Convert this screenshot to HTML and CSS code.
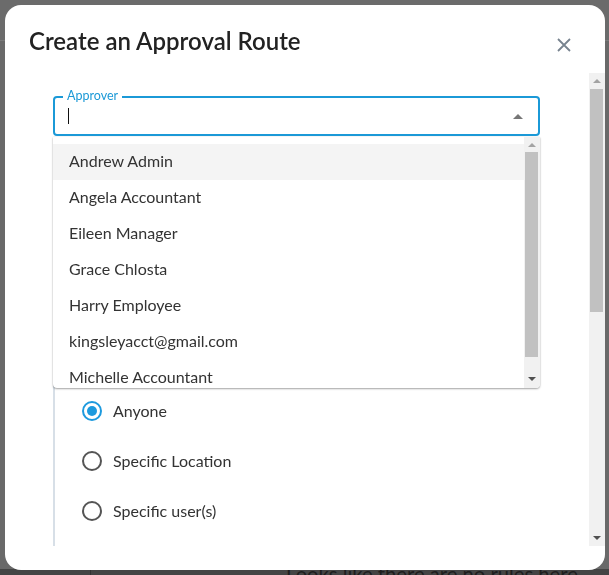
FILE: index.html
```html
<!DOCTYPE html>
<html lang="en">
<head>
<meta charset="utf-8">
<title>Create an Approval Route</title>
<link rel="stylesheet" href="styles.css">
</head>
<body>
<div class="page">
  <div class="page-top"></div>
  <div class="page-main"></div>
  <div class="page-foot">
    <div class="foot-side"></div>
    <div class="foot-main"><p class="empty">Looks like there are no rules here</p></div>
  </div>
</div>

<div class="modal">
  <header class="modal-head">
    <h2 class="modal-title">Create an Approval Route</h2>
    <button class="close" aria-label="Close">
      <svg width="24" height="24" viewBox="0 0 24 24"><path d="M6 6L18 18M18 6L6 18" stroke="#77838f" stroke-width="1.8" fill="none"/></svg>
    </button>
  </header>
  <div class="modal-body">
    <div class="modal-scroll">
      <div class="field">
        <span class="field-label">Approver</span>
        <span class="caret"></span>
        <span class="arrow-up"></span>
        <div class="listbox">
          <ul class="opts">
            <li class="opt active">Andrew Admin</li>
            <li class="opt">Angela Accountant</li>
            <li class="opt">Eileen Manager</li>
            <li class="opt">Grace Chlosta</li>
            <li class="opt">Harry Employee</li>
            <li class="opt">kingsleyacct@gmail.com</li>
            <li class="opt">Michelle Accountant</li>
          </ul>
          <div class="lscroll">
            <div class="sb-btn sb-btn-l"><span class="tri-up light"></span></div>
            <div class="lthumb"></div>
            <div class="sb-fill"></div>
            <div class="sb-btn sb-btn-l"><span class="tri-down"></span></div>
          </div>
        </div>
      </div>
      <div class="options">
        <label class="radio-row"><span class="radio checked"></span><span class="radio-text">Anyone</span></label>
        <label class="radio-row"><span class="radio"></span><span class="radio-text">Specific Location</span></label>
        <label class="radio-row"><span class="radio"></span><span class="radio-text">Specific user(s)</span></label>
        <div class="more"></div>
      </div>
    </div>
    <div class="vscroll">
      <div class="sb-btn"><span class="tri-up light"></span></div>
      <div class="thumb"></div>
      <div class="sb-fill"></div>
      <div class="sb-btn"><span class="tri-down"></span></div>
    </div>
  </div>
</div>
</body>
</html>
```

FILE: styles.css
```css
* { box-sizing: border-box; }
html, body { margin: 0; padding: 0; }
body {
  font-family: Lato, "Open Sans", sans-serif;
  width: 609px;
  height: 575px;
  overflow: hidden;
  background: #6b6b6b;
}

/* page behind the overlay */
.page { height: 575px; display: flex; flex-direction: column; }
.page-top { height: 41px; flex: none; background: #6b6b6b; border-bottom: 1px solid #7a7a7a; }
.page-main { flex: 1; background: #696969; }
.page-foot { height: 6px; flex: none; background: #444; display: flex; overflow: hidden; }
.foot-side { width: 91px; border-right: 1px solid #333; }
.foot-main { padding-left: 195px; }
.empty { margin: -5px 0 0; font-size: 20.2px; line-height: 20px; color: #1e1e1e; white-space: nowrap; }

/* modal */
.modal {
  position: fixed;
  left: 5px;
  top: 5px;
  width: 600px;
  height: 565px;
  background: #fff;
  border-radius: 16px;
  overflow: hidden;
  display: flex;
  flex-direction: column;
}
.modal-head {
  height: 68px;
  flex: none;
  display: flex;
  justify-content: space-between;
  align-items: flex-start;
  padding: 21px 29px 0 24px;
}
.modal-title { margin: 0; font-size: 24px; line-height: 30px; font-weight: 600; color: #222; }
.close {
  width: 24px; height: 24px; margin-top: 7px;
  border: 0; padding: 0; background: none;
  display: flex; align-items: center; justify-content: center;
}
.modal-body { height: 473px; flex: none; display: flex; }
.modal-scroll { flex: 1; overflow: hidden; padding: 23px 0 0 48px; }

/* scrollbars */
.vscroll { width: 16px; flex: none; background: #f1f1f1; display: flex; flex-direction: column; }
.sb-btn { height: 16px; flex: none; display: flex; align-items: center; justify-content: center; }
.sb-fill { flex: 1; }
.thumb { height: 223px; margin: 0 2px 0 1px; background: #c1c1c1; flex: none; }
.tri-up { width: 0; height: 0; border-left: 4px solid transparent; border-right: 4px solid transparent; border-bottom: 4px solid #505050; }
.tri-up.light { border-bottom-color: #a3a3a3; }
.tri-down { width: 0; height: 0; border-left: 4px solid transparent; border-right: 4px solid transparent; border-top: 4px solid #505050; }

/* field */
.field {
  position: relative;
  width: 487px;
  height: 40px;
  border: 2px solid #1b99d7;
  border-radius: 4px;
  display: flex;
  align-items: center;
  padding: 0 15px 0 13px;
}
.field-label {
  position: absolute;
  left: 8px;
  top: -9px;
  padding: 0 4px;
  background: #fff;
  font-size: 12.5px;
  line-height: 14px;
  color: #1b99d7;
}
.caret { width: 1px; height: 16px; background: #111; }
.arrow-up {
  margin-left: auto;
  width: 0; height: 0;
  border-left: 5px solid transparent;
  border-right: 5px solid transparent;
  border-bottom: 5px solid #777;
}

/* dropdown */
.listbox {
  position: absolute;
  left: -2px;
  right: -2px;
  top: calc(100% + 3px);
  height: 251px;
  background: #fff;
  border-radius: 0 0 4px 4px;
  box-shadow: 0 1px 2px rgba(0,0,0,0.35), 0 0 1px rgba(0,0,0,0.2);
  display: flex;
  overflow: hidden;
  z-index: 2;
}
.opts { flex: 1; list-style: none; margin: 0; padding: 7px 0 0; overflow: hidden; }
.opt { height: 36px; line-height: 34px; padding-left: 16px; font-size: 16px; color: #333; white-space: nowrap; }
.opt.active { background: #f4f4f4; }
.lscroll { width: 16px; flex: none; background: #f1f1f1; display: flex; flex-direction: column; padding-bottom: 2px; }
.sb-btn-l { height: 15px; }
.lthumb { height: 205px; margin: 0 2px 0 1px; background: #c1c1c1; flex: none; }

/* radios */
.options {
  margin-top: 14px;
  border-left: 2px solid #d7dfe7;
  padding: 236px 0 0 27px;
}
.radio-row { height: 50px; display: flex; align-items: center; gap: 11px; }
.radio {
  width: 20px; height: 20px; border-radius: 50%;
  border: 2px solid #555;
  display: flex; align-items: center; justify-content: center;
}
.radio.checked { border-color: #1d9ade; }
.radio.checked::after { content: ""; width: 10px; height: 10px; border-radius: 50%; background: #1d9ade; }
.radio-text { font-size: 16px; color: #333; padding-bottom: 2px; }
.more { height: 60px; }
```
